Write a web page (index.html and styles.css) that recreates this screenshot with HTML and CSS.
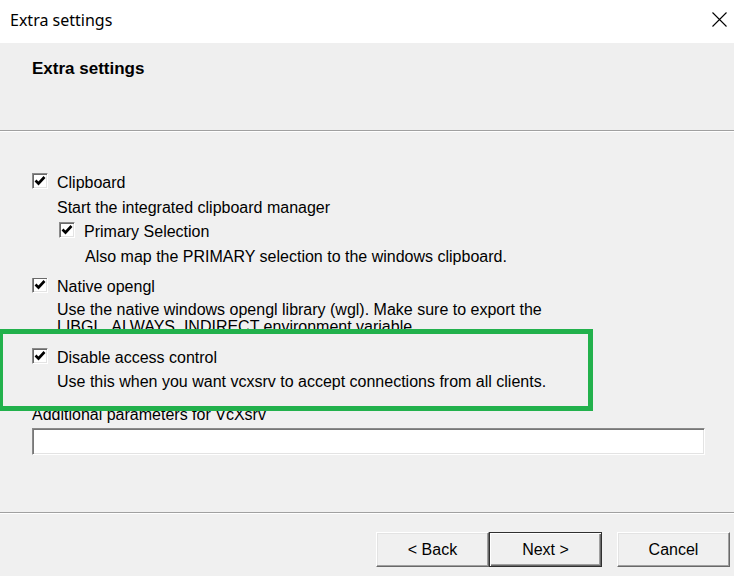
FILE: index.html
```html
<!DOCTYPE html>
<html lang="en">
  <head>
    <meta charset="UTF-8" />
    <meta name="viewport" content="width=device-width, initial-scale=1.0" />
    <title>Extra settings</title>
    <link rel="stylesheet" href="styles.css">
  </head>

  <body>
    <div class="window">
      <div class="titlebar">
        <span class="title">Extra settings</span>
        <svg class="close" width="15" height="15" viewBox="0 0 15 15">
          <path d="M0.5 0.5 L14.5 14.5 M14.5 0.5 L0.5 14.5" stroke="#000" stroke-width="1.1" fill="none" />
        </svg>
      </div>

      <div class="header">
        <h1>Extra settings</h1>
      </div>

      <div class="content">
        <!-- Clipboard -->
        <div class="option">
          <label class="check-row">
            <span class="box"><svg width="12" height="12" viewBox="0 0 12 12"><path d="M1.5 5.5 L4.5 8.5 L10.5 2" stroke="#000" stroke-width="2.6" fill="none" /></svg></span>
            <span>Clipboard</span>
          </label>
          <p class="desc gap-8">Start the integrated clipboard manager</p>

          <div class="option sub gap-7">
            <label class="check-row">
              <span class="box"><svg width="12" height="12" viewBox="0 0 12 12"><path d="M1.5 5.5 L4.5 8.5 L10.5 2" stroke="#000" stroke-width="2.6" fill="none" /></svg></span>
              <span>Primary Selection</span>
            </label>
            <p class="desc gap-8">Also map the PRIMARY selection to the windows clipboard.</p>
          </div>
        </div>

        <!-- Native opengl -->
        <div class="option native">
          <label class="check-row">
            <span class="box"><svg width="12" height="12" viewBox="0 0 12 12"><path d="M1.5 5.5 L4.5 8.5 L10.5 2" stroke="#000" stroke-width="2.6" fill="none" /></svg></span>
            <span>Native opengl</span>
          </label>
          <p class="desc gap-6">Use the native windows opengl library (wgl). Make sure to export the<br>LIBGL_ALWAYS_INDIRECT environment variable.</p>
        </div>

        <!-- Disable access control -->
        <div class="option access">
          <label class="check-row">
            <span class="box"><svg width="12" height="12" viewBox="0 0 12 12"><path d="M1.5 5.5 L4.5 8.5 L10.5 2" stroke="#000" stroke-width="2.6" fill="none" /></svg></span>
            <span>Disable access control</span>
          </label>
          <p class="desc gap-7">Use this when you want vcxsrv to accept connections from all clients.</p>
        </div>

        <p class="field-label">Additional parameters for VcXsrv</p>
        <input class="textbox" type="text" value="">

        <div class="highlight"></div>
      </div>

      <div class="footer">
        <button class="btn">&lt; Back</button>
        <button class="btn default">Next &gt;</button>
        <button class="btn cancel">Cancel</button>
      </div>
    </div>
  </body>
</html>
```

FILE: styles.css
```css
/* Whole page */
body {
  margin: 0;
  font-family: "Liberation Sans", Arial, sans-serif;
  font-size: 16px;
  color: #000;
  background: #f0f0f0;
}

.window {
  display: flex;
  flex-direction: column;
  width: 734px;
  height: 576px;
  overflow: hidden;
}

/* Title bar */
.titlebar {
  display: flex;
  justify-content: space-between;
  align-items: flex-start;
  height: 43px;
  box-sizing: border-box;
  padding: 10px 7px 0 10px;
  background: #fff;
}

.title {
  font-family: "Noto Sans", sans-serif;
  font-size: 16px;
  line-height: 20px;
}

.close {
  margin-top: 2px;
}

/* Wizard header */
.header {
  height: 88px;
  box-sizing: border-box;
  padding: 16px 0 0 32px;
  background: #efefef;
  border-bottom: 1px solid #a0a0a0;
  box-shadow: 0 1px 0 #fff;
}

.header h1 {
  margin: 0;
  font-size: 17px;
  line-height: 20px;
  font-weight: bold;
}

/* Options */
.content {
  position: relative;
  flex: 1;
  padding: 43px 0 0 32px;
}

.option p {
  margin: 0;
}

.check-row {
  display: flex;
  align-items: flex-start;
  gap: 9px;
  height: 17px;
  line-height: 17px;
}

.box {
  display: flex;
  justify-content: center;
  align-items: center;
  width: 16px;
  height: 16px;
  box-sizing: border-box;
  margin-top: -1px;
  background: #fff;
  border: 1px solid;
  border-color: #8a8a8a #fff #fff #8a8a8a;
  box-shadow: inset 1px 1px 0 #696969, inset -1px -1px 0 #e3e3e3;
}

.desc {
  padding-left: 25px;
  line-height: 17px;
}

.sub {
  padding-left: 27px;
}

.sub .desc {
  padding-left: 26px;
}

.gap-6 { margin-top: 6px !important; }
.gap-7 { margin-top: 7px !important; }
.gap-8 { margin-top: 8px !important; }

.native {
  margin-top: 13px;
  height: 56px;
  overflow: hidden;
}

.access {
  margin-top: 15px;
}

.field-label {
  margin: 16px 0 0 0;
  line-height: 17px;
}

.textbox {
  display: block;
  width: 673px;
  height: 27px;
  box-sizing: border-box;
  margin-top: 5px;
  padding: 0 4px;
  background: #fff;
  border: 1px solid;
  border-color: #8a8a8a #fff #fff #8a8a8a;
  box-shadow: inset 1px 1px 0 #777, inset -1px -1px 0 #e3e3e3;
  font: inherit;
  outline: none;
}

/* Green annotation frame drawn over the dialog */
.highlight {
  position: absolute;
  left: -2px;
  top: 198px;
  width: 595px;
  height: 82px;
  box-sizing: border-box;
  border: 5px solid #22b14c;
}

/* Bottom buttons */
.footer {
  display: flex;
  justify-content: flex-end;
  align-items: flex-start;
  height: 64px;
  box-sizing: border-box;
  padding: 19px 4px 0 0;
  border-top: 1px solid #a0a0a0;
  box-shadow: inset 0 1px 0 #fff;
}

.btn {
  width: 113px;
  height: 35px;
  padding: 0;
  font-family: "Liberation Sans", Arial, sans-serif;
  font-size: 16px;
  color: #000;
  background: #f0f0f0;
  border: 1px solid;
  border-color: #fff #696969 #696969 #fff;
  box-shadow: inset -1px -1px 0 #a0a0a0, inset 1px 1px 0 #e3e3e3;
}

.btn.default {
  border: 1px solid #303030;
  box-shadow: inset 1px 1px 0 #fff, inset -1px -1px 0 #696969, inset -2px -2px 0 #a0a0a0;
}

.btn.cancel {
  margin-left: 15px;
}
```
